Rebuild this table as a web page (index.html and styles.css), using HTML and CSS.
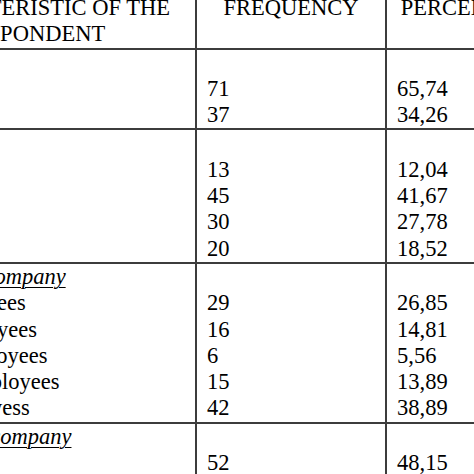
FILE: index.html
```html
<!DOCTYPE html>
<html lang="en">
<head>
<meta charset="utf-8">
<title>Characteristic of the respondent</title>
<link rel="stylesheet" href="styles.css">
</head>
<body>
<table class="stats">
  <thead>
    <tr>
      <th class="c-label">CHARACTERISTIC OF THE<br>RESPONDENT</th>
      <th class="c-freq">FREQUENCY</th>
      <th class="c-pct">PERCENTAGE</th>
    </tr>
  </thead>
  <tbody class="section">
    <tr><td class="c-label"><span class="group">Gender</span></td><td class="c-freq"></td><td class="c-pct"></td></tr>
    <tr><td class="c-label">Male</td><td class="c-freq">71</td><td class="c-pct">65,74</td></tr>
    <tr><td class="c-label">Female</td><td class="c-freq">37</td><td class="c-pct">34,26</td></tr>
  </tbody>
  <tbody class="section">
    <tr><td class="c-label"><span class="group">Age</span></td><td class="c-freq"></td><td class="c-pct"></td></tr>
    <tr><td class="c-label">&lt; 25</td><td class="c-freq">13</td><td class="c-pct">12,04</td></tr>
    <tr><td class="c-label">25-35</td><td class="c-freq">45</td><td class="c-pct">41,67</td></tr>
    <tr><td class="c-label">36-45</td><td class="c-freq">30</td><td class="c-pct">27,78</td></tr>
    <tr><td class="c-label">&gt; 45</td><td class="c-freq">20</td><td class="c-pct">18,52</td></tr>
  </tbody>
  <tbody class="section">
    <tr><td class="c-label"><span class="group">Profile of company</span></td><td class="c-freq"></td><td class="c-pct"></td></tr>
    <tr><td class="c-label">1-5 employees</td><td class="c-freq">29</td><td class="c-pct">26,85</td></tr>
    <tr><td class="c-label">6-10 employees</td><td class="c-freq">16</td><td class="c-pct">14,81</td></tr>
    <tr><td class="c-label">11-20 employees</td><td class="c-freq">6</td><td class="c-pct">5,56</td></tr>
    <tr><td class="c-label">21-100 employees</td><td class="c-freq">15</td><td class="c-pct">13,89</td></tr>
    <tr><td class="c-label">&gt;50 employess</td><td class="c-freq">42</td><td class="c-pct">38,89</td></tr>
  </tbody>
  <tbody class="section">
    <tr><td class="c-label"><span class="group">Capital of company</span></td><td class="c-freq"></td><td class="c-pct"></td></tr>
    <tr><td class="c-label">Local</td><td class="c-freq">52</td><td class="c-pct">48,15</td></tr>
    <tr><td class="c-label">Foreign</td><td class="c-freq">56</td><td class="c-pct">51,85</td></tr>
  </tbody>
</table>
</body>
</html>
```

FILE: styles.css
```css
html, body {
  margin: 0;
  padding: 0;
  background: #ffffff;
  overflow: hidden;
}

.stats {
  border-collapse: separate;
  border-spacing: 0;
  margin-left: -131px;
  margin-top: -5px;
  font-family: "Liberation Serif", "Times New Roman", serif;
  font-size: 22.5px;
  line-height: 26.3px;
  color: #000000;
  table-layout: fixed;
  width: 690px;
}

.stats th,
.stats td {
  padding: 0;
  white-space: nowrap;
  vertical-align: top;
  font-weight: normal;
  text-align: left;
}

.stats .c-label {
  width: 326px;
  border-right: 2px solid #3c3c3c;
}

.stats .c-freq {
  width: 188px;
  border-right: 2px solid #3c3c3c;
}

.stats .c-pct {
  width: 172px;
}

.stats th.c-label,
.stats th.c-freq,
.stats th.c-pct {
  text-align: center;
}

.stats td.c-label {
  padding-left: 25px;
  width: 301px;
}

.stats td.c-freq {
  padding-left: 10px;
  width: 178px;
}

.stats td.c-pct {
  padding-left: 10px;
  width: 162px;
}

.section tr:first-child td {
  border-top: 2px solid #3c3c3c;
}

.group {
  font-style: italic;
  text-decoration: underline;
  text-underline-offset: 3px;
  text-decoration-thickness: 1px;
}
```
